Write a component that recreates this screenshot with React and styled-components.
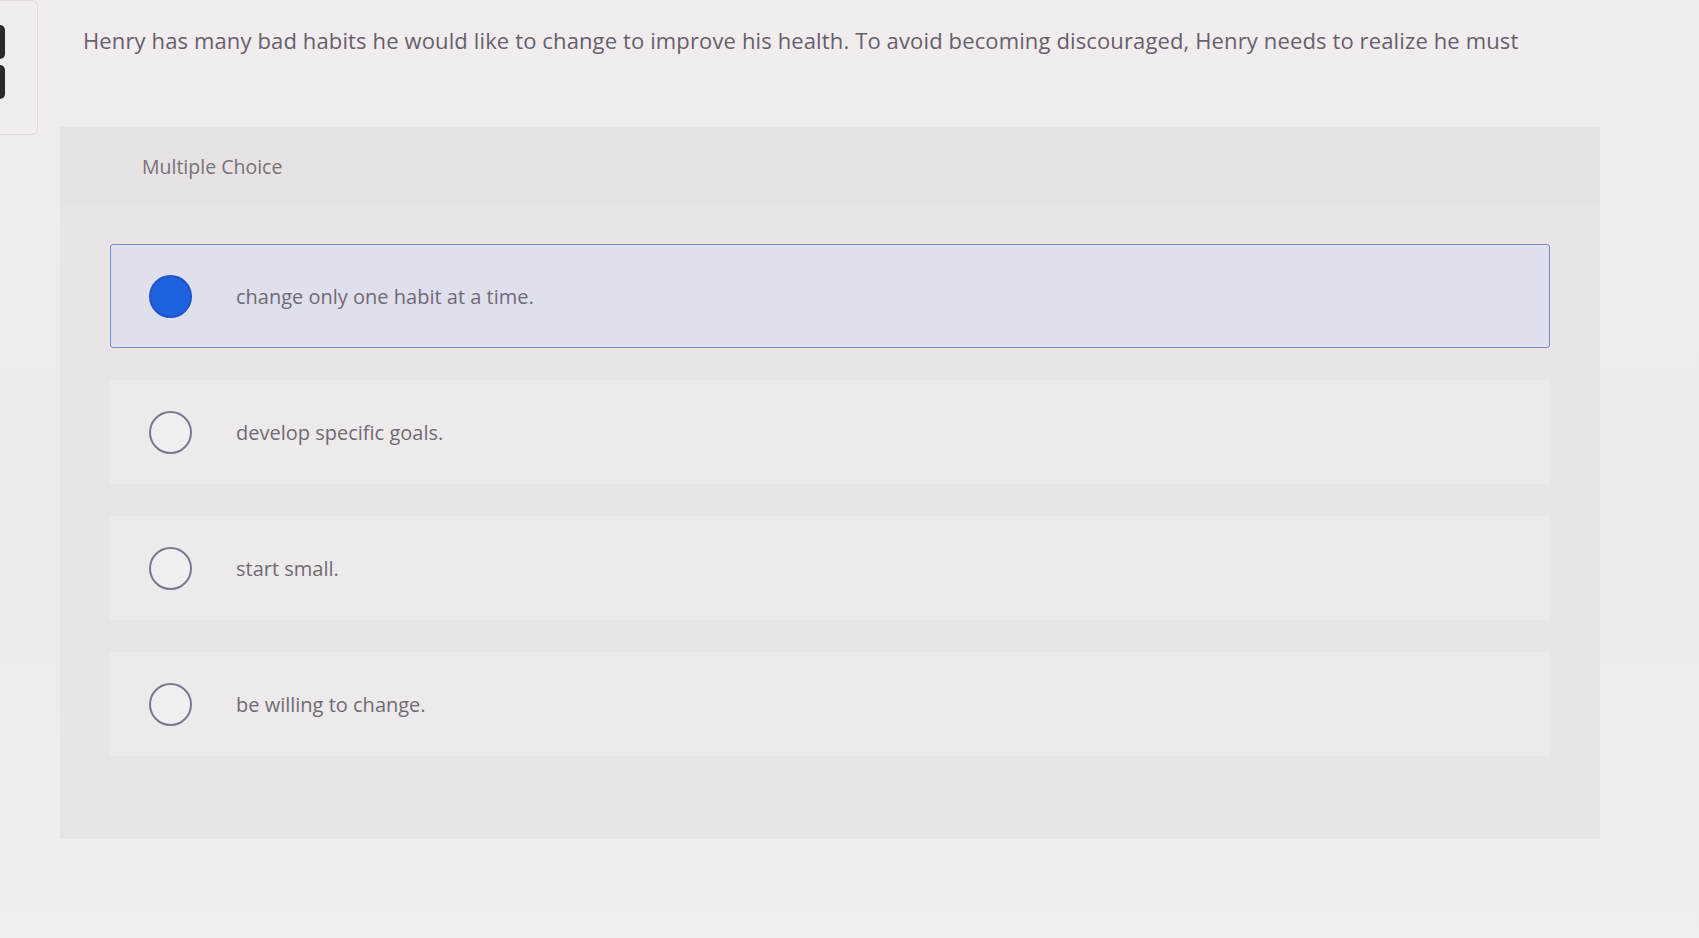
import React from 'react';
import styled, { createGlobalStyle } from 'styled-components';

const GlobalStyle = createGlobalStyle`
  html, body {
    margin: 0;
    padding: 0;
    background: #f0ebed;
  }
  body {
    font-family: "Open Sans", Lato, "Liberation Sans", sans-serif;
    color: #6b6370;
  }
`;

const Page = styled.div`
  display: flex;
  align-items: flex-start;
  min-height: 938px;
  background: linear-gradient(180deg, #f1ecee 0%, #eee9eb 60%, #f2eef0 100%);
`;

const SideStub = styled.div`
  flex: none;
  width: 38px;
  height: 135px;
  border: 1px solid #e0d9dd;
  border-left: none;
  border-radius: 0 6px 6px 0;
  background: #f1edef;
  display: flex;
  flex-direction: column;
  gap: 6px;
  padding-top: 24px;
  box-sizing: border-box;
`;

const StubMark = styled.div`
  width: 5px;
  height: 34px;
  background: #2b2629;
  border-radius: 0 12px 12px 0;
`;

const Main = styled.div`
  flex: 1;
  padding: 26px 99px 0 22px;
`;

const Question = styled.p`
  margin: 0 0 72px 23px;
  font-size: 22px;
  line-height: 29px;
  letter-spacing: 0.13px;
  color: #675f6c;
  white-space: nowrap;
`;

const Panel = styled.section`
  width: 1540px;
  background: #e9e4e6;
  padding-bottom: 83px;
`;

const PanelHeader = styled.div`
  height: 78px;
  display: flex;
  align-items: center;
  padding-left: 82px;
  background: #e7e2e4;
  font-size: 19.5px;
  color: #787177;
`;

const Options = styled.div`
  display: flex;
  flex-direction: column;
  gap: 32px;
  padding: 39px 50px 0 50px;
`;

const Option = styled.label`
  height: 104px;
  box-sizing: border-box;
  display: flex;
  align-items: center;
  gap: 44px;
  padding-left: 38px;
  border-radius: 3px;
  border: 1px solid ${p => (p.$selected ? '#7f88c6' : 'transparent')};
  background: ${p => (p.$selected ? '#dfdfed' : '#edeaec')};
  font-size: 20px;
  color: #716a74;
  cursor: pointer;
`;

const Radio = styled.span`
  flex: none;
  width: 43px;
  height: 43px;
  box-sizing: border-box;
  border-radius: 50%;
  border: 2px solid ${p => (p.$checked ? '#1d55c9' : '#7d7690')};
  background: ${p => (p.$checked ? '#1f62e0' : '#f1eef0')};
`;

const choices = [
  'change only one habit at a time.',
  'develop specific goals.',
  'start small.',
  'be willing to change.',
];

export default function App() {
  return (
    <>
      <GlobalStyle />
      <Page>
        <SideStub>
          <StubMark />
          <StubMark />
        </SideStub>
        <Main>
          <Question>
            Henry has many bad habits he would like to change to improve his health. To avoid becoming discouraged, Henry needs to realize he must
          </Question>
          <Panel>
            <PanelHeader>Multiple Choice</PanelHeader>
            <Options>
              {choices.map((c, i) => (
                <Option key={c} $selected={i === 0}>
                  <Radio $checked={i === 0} />
                  {c}
                </Option>
              ))}
            </Options>
          </Panel>
        </Main>
      </Page>
    </>
  );
}
